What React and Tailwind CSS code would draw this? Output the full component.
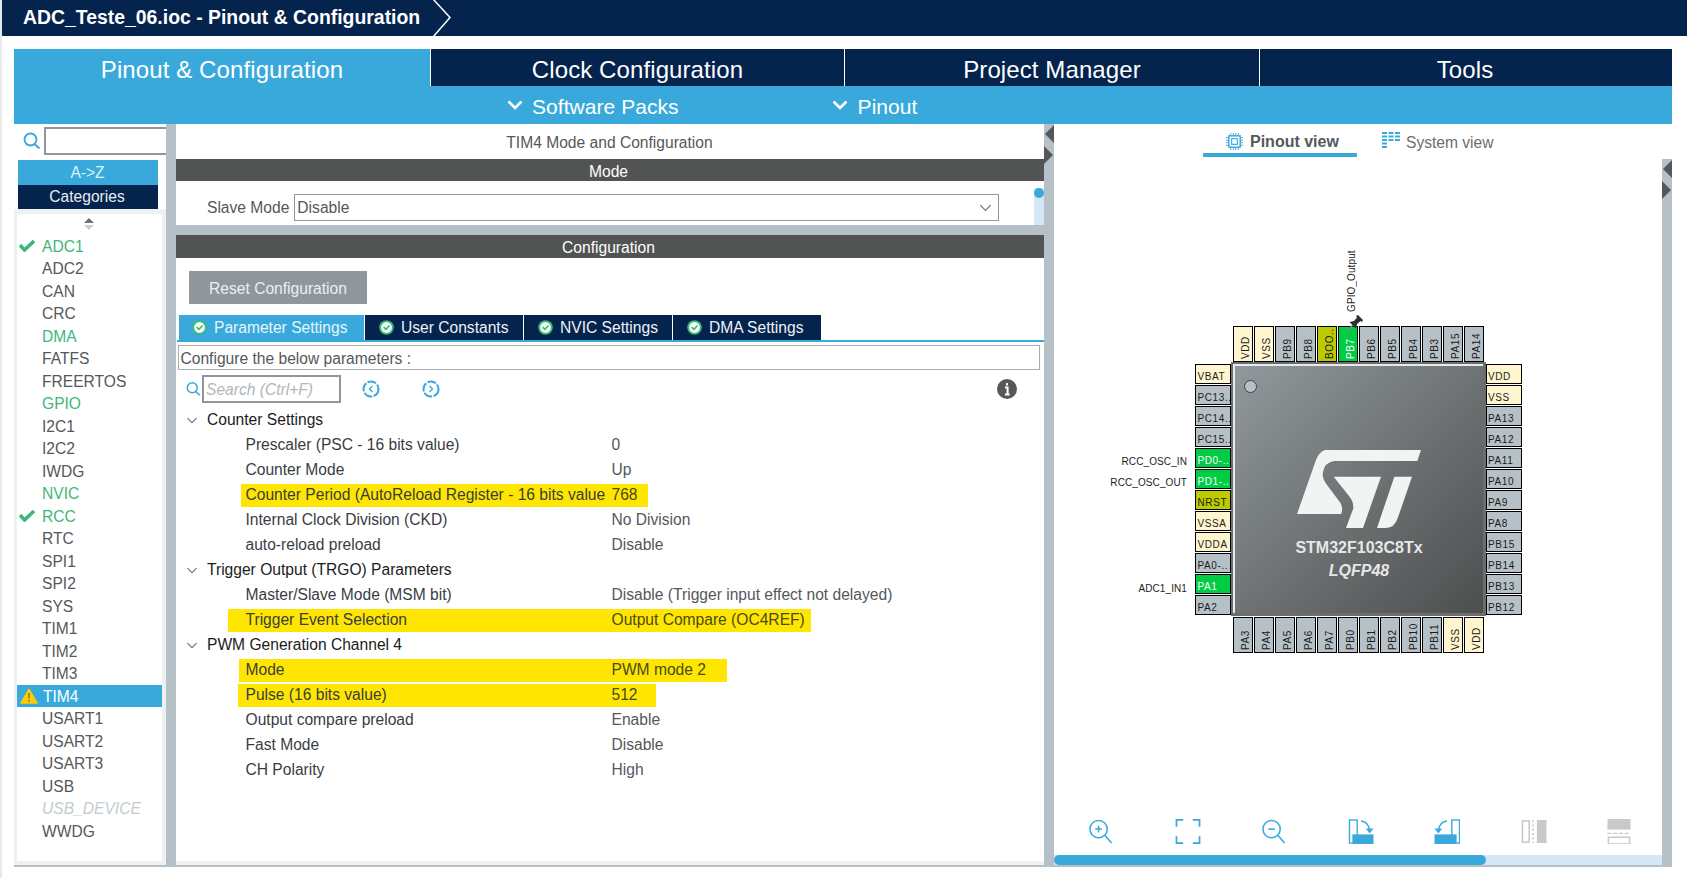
import React from 'react';

const peripherals = [
  { name: 'ADC1', state: 'ok' },
  { name: 'ADC2' },
  { name: 'CAN' },
  { name: 'CRC' },
  { name: 'DMA', state: 'green' },
  { name: 'FATFS' },
  { name: 'FREERTOS' },
  { name: 'GPIO', state: 'green' },
  { name: 'I2C1' },
  { name: 'I2C2' },
  { name: 'IWDG' },
  { name: 'NVIC', state: 'green' },
  { name: 'RCC', state: 'ok' },
  { name: 'RTC' },
  { name: 'SPI1' },
  { name: 'SPI2' },
  { name: 'SYS' },
  { name: 'TIM1' },
  { name: 'TIM2' },
  { name: 'TIM3' },
  { name: 'TIM4', state: 'selected' },
  { name: 'USART1' },
  { name: 'USART2' },
  { name: 'USART3' },
  { name: 'USB' },
  { name: 'USB_DEVICE', state: 'disabled' },
  { name: 'WWDG' },
];

const paramGroups = [
  {
    title: 'Counter Settings',
    rows: [
      { label: 'Prescaler (PSC - 16 bits value)', value: '0' },
      { label: 'Counter Mode', value: 'Up' },
      { label: 'Counter Period (AutoReload Register - 16 bits value', value: '768', hl: 'ml-[-5px] pl-[5px] w-[407px]' },
      { label: 'Internal Clock Division (CKD)', value: 'No Division' },
      { label: 'auto-reload preload', value: 'Disable' },
    ],
  },
  {
    title: 'Trigger Output (TRGO) Parameters',
    rows: [
      { label: 'Master/Slave Mode (MSM bit)', value: 'Disable (Trigger input effect not delayed)' },
      { label: 'Trigger Event Selection', value: 'Output Compare (OC4REF)', hl: 'ml-[-18px] pl-[18px] w-[583px]' },
    ],
  },
  {
    title: 'PWM Generation Channel 4',
    rows: [
      { label: 'Mode', value: 'PWM mode 2', hl: 'ml-[-7px] pl-[7px] w-[488px]' },
      { label: 'Pulse (16 bits value)', value: '512', hl: 'ml-[-8px] pl-[8px] w-[418px]' },
      { label: 'Output compare preload', value: 'Enable' },
      { label: 'Fast Mode', value: 'Disable' },
      { label: 'CH Polarity', value: 'High' },
    ],
  },
];

const configTabs = [
  { label: 'Parameter Settings', w: 'w-[185px]', pl: 'pl-[13px]', on: true },
  { label: 'User Constants', w: 'w-[158px]', pl: 'pl-[14px]' },
  { label: 'NVIC Settings', w: 'w-[148px]', pl: 'pl-[14px]' },
  { label: 'DMA Settings', w: 'w-[148px]', pl: 'pl-[14px]' },
];

const pinColors = {
  io: 'bg-[#b6c1c7] text-[#1c1c1c]',
  pwr: 'bg-[#fff6cf] text-[#1c1c1c]',
  ok: 'bg-[#00cc44] text-white',
  olive: 'bg-[#bccb00] text-[#1c1c1c]',
};

const topPins = [['VDD', 'pwr'], ['VSS', 'pwr'], ['PB9', 'io'], ['PB8', 'io'], ['BOO..', 'olive'], ['PB7', 'ok'], ['PB6', 'io'], ['PB5', 'io'], ['PB4', 'io'], ['PB3', 'io'], ['PA15', 'io'], ['PA14', 'io']];
const bottomPins = [['PA3', 'io'], ['PA4', 'io'], ['PA5', 'io'], ['PA6', 'io'], ['PA7', 'io'], ['PB0', 'io'], ['PB1', 'io'], ['PB2', 'io'], ['PB10', 'io'], ['PB11', 'io'], ['VSS', 'pwr'], ['VDD', 'pwr']];
const leftPins = [['VBAT', 'pwr'], ['PC13..', 'io'], ['PC14..', 'io'], ['PC15..', 'io'], ['PD0-..', 'ok'], ['PD1-..', 'ok'], ['NRST', 'olive'], ['VSSA', 'pwr'], ['VDDA', 'pwr'], ['PA0-..', 'io'], ['PA1', 'ok'], ['PA2', 'io']];
const rightPins = [['VDD', 'pwr'], ['VSS', 'pwr'], ['PA13', 'io'], ['PA12', 'io'], ['PA11', 'io'], ['PA10', 'io'], ['PA9', 'io'], ['PA8', 'io'], ['PB15', 'io'], ['PB14', 'io'], ['PB13', 'io'], ['PB12', 'io']];

const SearchIcon = ({ className }) => (
  <svg viewBox="0 0 18 18" className={className} fill="none" stroke="#39a9dc">
    <circle cx="7.5" cy="7.5" r="6" strokeWidth="1.8" />
    <path d="M11.5 12 L16.5 16.5" strokeWidth="2" />
  </svg>
);

const GreenCheck = ({ className }) => (
  <svg viewBox="0 0 16 12" className={className} fill="none" stroke="#3cb878" strokeWidth="3.6">
    <path d="M1 5 L5.5 10 L15 1" />
  </svg>
);

const CircleCheck = () => (
  <svg viewBox="0 0 16 16" className="w-[15px] h-[15px] shrink-0">
    <circle cx="8" cy="8" r="7.8" fill="#3cb878" />
    <circle cx="8" cy="8" r="5.8" fill="#f2fbf6" />
    <path d="M5 7.6 L7.4 10 L11.2 5.8" fill="none" stroke="#3cb878" strokeWidth="1.6" />
  </svg>
);

const Chevron = ({ className, color = '#fff', width = 2.6 }) => (
  <svg viewBox="0 0 16 10" className={className} fill="none" stroke={color} strokeWidth={width}>
    <path d="M1.5 1.5 L8 8 L14.5 1.5" />
  </svg>
);

const Triangles = () => (
  <>
    <div className="w-0 h-0 border-y-[9px] border-y-transparent border-r-[9px] border-r-[#55585a] ml-auto" />
    <div className="w-0 h-0 border-y-[9px] border-y-transparent border-l-[9px] border-l-[#55585a] mt-[3px]" />
  </>
);

const PeripheralRow = ({ item }) => {
  const colors = {
    ok: 'text-[#3cb878]',
    green: 'text-[#3cb878]',
    selected: 'bg-[#39a9dc] text-white',
    disabled: 'text-[#c3cbd0] italic',
  };
  return (
    <div className={`relative h-[22.5px] flex items-center pl-[25px] pt-[1px] ${colors[item.state] || 'text-[#55585a]'}`}>
      {item.state === 'ok' && <GreenCheck className="absolute left-[2px] top-[5px] w-[16px] h-[12px]" />}
      {item.state === 'selected' && (
        <svg viewBox="0 0 18 16" className="absolute left-[3px] top-[3px] w-[18px] h-[16px]">
          <path d="M9 1.5 L17 15 L1 15 Z" fill="#ffcc00" stroke="#ffcc00" strokeWidth="1.5" strokeLinejoin="round" />
          <path d="M9 5 L9 10.5 M9 11.8 L9 13.8" stroke="#8a7a30" strokeWidth="1.6" />
        </svg>
      )}
      <span className={item.state === 'selected' ? 'ml-[1px]' : ''}>{item.name}</span>
    </div>
  );
};

const SidePin = ({ pin, side }) => (
  <div className={`w-[36px] h-[20px] border border-black flex items-center pt-[4px] text-[10px] tracking-[0.6px] whitespace-nowrap overflow-hidden ${side === 'left' ? 'pl-[1.5px]' : 'pl-[1px]'} ${pinColors[pin[1]]}`}>
    {pin[0]}
  </div>
);

const VerticalPin = ({ pin }) => (
  <div className={`w-[20px] h-[36px] border border-black flex items-center justify-start [writing-mode:vertical-rl] rotate-180 pt-[2px] pr-[4px] text-[10px] tracking-[0.6px] whitespace-nowrap overflow-hidden ${pinColors[pin[1]]}`}>
    {pin[0]}
  </div>
);

export default function App() {
  return (
    <div className="w-[1687px] h-[878px] overflow-hidden bg-white border-l-2 border-[#e6e8ea] font-['Liberation_Sans',Arial,sans-serif] text-[15.6px] text-[#55585a]">
      {/* top breadcrumb */}
      <div className="h-[36px] bg-[#04234d] flex items-center pl-[21px] relative">
        <span className="text-white font-bold text-[19.4px] whitespace-nowrap">ADC_Teste_06.ioc - Pinout &amp; Configuration</span>
        <svg viewBox="0 0 20 36" className="absolute left-[430px] top-0 w-[20px] h-[36px]" fill="none" stroke="#fff" strokeWidth="1.5">
          <path d="M1 -1 L18 17.5 L1 37" />
        </svg>
      </div>

      <div className="ml-[12px] w-[1658px] mt-[13px]">
        {/* main tabs */}
        <div className="h-[37px] flex text-[24px] tracking-[0.1px] text-white">
          <div className="w-[416px] bg-[#39a9dc] flex items-center justify-center pt-[4px] mr-[1px]">Pinout &amp; Configuration</div>
          <div className="w-[413px] bg-[#04234d] flex items-center justify-center pt-[4px] mr-[1px]">Clock Configuration</div>
          <div className="w-[414px] bg-[#04234d] flex items-center justify-center pt-[4px] mr-[1px]">Project Manager</div>
          <div className="flex-1 bg-[#04234d] flex items-center justify-center pt-[4px] pr-[2px]">Tools</div>
        </div>
        <div className="h-[38px] bg-[#39a9dc] flex items-center text-[21px] tracking-[0.05px] text-white pl-[493px]">
          <Chevron className="w-[16px] h-[10px] mr-[9px]" />
          <span className="pt-[3px]">Software Packs</span>
          <Chevron className="w-[16px] h-[10px] ml-[153px] mr-[10px]" />
          <span className="pt-[3px]">Pinout</span>
        </div>

        {/* body */}
        <div className="h-[741px] flex border-b-0">
          {/* peripherals list */}
          <div className="w-[152px] flex flex-col">
            <div className="h-[85px] bg-white">
              <div className="flex items-center h-[30px] mt-[2px] pl-[9px]">
                <SearchIcon className="w-[18px] h-[18px] mr-[3px]" />
                <div className="flex-1 h-[28px] border-2 border-r-0 border-[#8f979d]" />
              </div>
              <div className="mx-[4px] mt-[4px] w-[140px]">
                <div className="h-[25px] bg-[#39a9dc] text-[#dff2fb] flex items-center justify-center pr-[1px]">A-&gt;Z</div>
                <div className="h-[24px] bg-[#04234d] text-[#e8edf2] flex items-center justify-center pr-[2px]">Categories</div>
              </div>
            </div>
            <div className="flex-1 bg-[#eef0f2] pl-[3px] pr-[4px] pt-[5px] pb-[4px] min-h-0">
              <div className="h-full bg-white pt-[20.75px] relative">
                <div className="absolute left-[67px] top-[4px] flex flex-col gap-[2px]">
                  <div className="w-0 h-0 border-x-[5px] border-x-transparent border-b-[5px] border-b-[#6d7275]" />
                  <div className="w-0 h-0 border-x-[5px] border-x-transparent border-t-[5px] border-t-[#c9ced1]" />
                </div>
                {peripherals.map((item) => (
                  <PeripheralRow key={item.name} item={item} />
                ))}
              </div>
            </div>
          </div>

          <div className="w-[10px] bg-[#b6c1c7]" />

          {/* mode and configuration */}
          <div className="w-[868px] flex flex-col">
            <div className="h-[35px] bg-white flex items-center justify-center pt-[3px] pr-[1px]">TIM4 Mode and Configuration</div>
            <div className="h-[22px] bg-[#525453] text-white flex items-center justify-center pt-[4px] pr-[3px]">Mode</div>
            <div className="h-[44px] bg-white flex items-start">
              <div className="flex items-center mt-[13px] pl-[31px]">
                <span className="mr-[5px] pt-[1px]">Slave Mode</span>
                <div className="w-[705px] h-[27px] border-[1.5px] border-[#8f979d] flex items-center pl-[2px] pt-[1px] relative">
                  Disable
                  <Chevron className="absolute right-[6px] top-[9px] w-[13px] h-[8px]" color="#6d7275" width={1.5} />
                </div>
              </div>
              <div className="ml-auto mt-[7px] w-[10px] h-[37px] bg-[#d6e6f5]">
                <div className="w-[10px] h-[10px] rounded-full bg-[#39a9dc]" />
              </div>
            </div>
            <div className="h-[10px] bg-[#b6c1c7]" />
            <div className="h-[23px] bg-[#525453] text-white flex items-center justify-center pt-[3px] pr-[3px]">Configuration</div>

            <div className="flex-1 bg-white border-b-4 border-[#eef0f2] min-h-0">
              <div className="w-[178px] h-[33px] mt-[13px] ml-[13px] bg-[#8f979d] text-[#eceef0] flex items-center justify-center pt-[2px]">Reset Configuration</div>
              <div className="h-[25px] mt-[11px] ml-[3px] flex">
                {configTabs.map((tab) => (
                  <div key={tab.label} className={`${tab.w} ${tab.pl} mr-[1px] flex items-center gap-[7px] ${tab.on ? 'bg-[#39a9dc] text-[#e6f5fc]' : 'bg-[#04234d] text-[#eef2f6]'}`}>
                    <CircleCheck />
                    <span className="whitespace-nowrap">{tab.label}</span>
                  </div>
                ))}
              </div>
              <div className="h-[2px] ml-[1px] bg-[#39a9dc]" />
              <div className="h-[25px] w-[862px] mt-[3px] ml-[2px] border-[1.5px] border-[#a7adb2] flex items-center pl-[1.5px] pt-[2px]">Configure the below parameters :</div>
              <div className="h-[28px] mt-[5px] flex items-center pl-[10px]">
                <SearchIcon className="w-[15px] h-[16px] mr-[1px]" />
                <div className="w-[139px] h-[28px] border-2 border-[#8f979d] flex items-center pl-[2px] pt-[1px] italic text-[#b0b6ba]">Search (Ctrl+F)</div>
                <svg viewBox="0 0 18 18" className="w-[18px] h-[18px] ml-[21px]" fill="none" stroke="#39a9dc">
                  <circle cx="9" cy="9" r="7.5" strokeWidth="2" strokeDasharray="9 1.5" />
                  <path d="M10.5 6 L7.5 9 L10.5 12" strokeWidth="1.4" />
                </svg>
                <svg viewBox="0 0 18 18" className="w-[18px] h-[18px] ml-[42px]" fill="none" stroke="#39a9dc">
                  <circle cx="9" cy="9" r="7.5" strokeWidth="2" strokeDasharray="9 1.5" />
                  <path d="M7.5 6 L10.5 9 L7.5 12" strokeWidth="1.4" />
                </svg>
                <svg viewBox="0 0 20 20" className="w-[20px] h-[20px] ml-[557px]">
                  <circle cx="10" cy="10" r="10" fill="#55585a" />
                  <path d="M10 4 L10 6.4 M8 8.6 L10.6 8.6 L10.6 15 M8 15.4 L12.6 15.4" stroke="#fff" strokeWidth="2" fill="none" />
                </svg>
              </div>

              <div className="mt-[4.5px] text-[#3a3d3f]">
                {paramGroups.map((group) => (
                  <div key={group.title}>
                    <div className="h-[25px] flex items-center pl-[10px] text-[#1c1c1c]">
                      <Chevron className="w-[12px] h-[7px] mr-[9px]" color="#6d7275" width={1.6} />
                      {group.title}
                    </div>
                    {group.rows.map((row) => (
                      <div key={row.label} className="h-[25px] flex items-center pl-[69.5px]">
                        <div className={`flex items-center h-[23px] whitespace-nowrap ${row.hl ? `bg-[#ffe600] ${row.hl}` : 'w-[366px]'}`}>
                          <span className="w-[366px] shrink-0">{row.label}</span>
                          <span className={`whitespace-nowrap ${row.hl ? 'text-[#4a4a1a]' : 'text-[#55585a]'}`}>{row.value}</span>
                        </div>
                      </div>
                    ))}
                  </div>
                ))}
              </div>
            </div>
          </div>

          <div className="w-[10px] bg-[#b6c1c7] pt-[1px] overflow-hidden">
            <Triangles />
          </div>

          {/* pinout view */}
          <div className="w-[618px] flex flex-col bg-white">
            <div className="h-[35px] flex">
              <div className="ml-[149px] w-[154px] h-[33px] border-b-4 border-[#39a9dc] flex items-center pt-[6px] pl-[23px] font-bold text-[16px] text-[#55585a]">
                <svg viewBox="0 0 18 18" className="w-[17px] h-[17px] mr-[7px]" fill="none" stroke="#39a9dc">
                  <rect x="3" y="3" width="12" height="12" strokeWidth="1.5" />
                  <rect x="6" y="6" width="6" height="6" strokeWidth="1.2" />
                  <path d="M5 0 V3 M7.7 0 V3 M10.3 0 V3 M13 0 V3 M5 15 V18 M7.7 15 V18 M10.3 15 V18 M13 15 V18 M0 5 H3 M0 7.7 H3 M0 10.3 H3 M0 13 H3 M15 5 H18 M15 7.7 H18 M15 10.3 H18 M15 13 H18" strokeWidth="1" />
                </svg>
                Pinout view
              </div>
              <div className="ml-[25px] h-[33px] flex items-center pt-[4px] text-[#6a6e71]">
                <svg viewBox="0 0 18 18" className="w-[18px] h-[18px] mr-[6px] -mt-[3px]" fill="#39a9dc">
                  <rect x="0" y="0" width="5" height="2" />
                  <rect x="6.5" y="0" width="5" height="2" />
                  <rect x="13" y="0" width="5" height="2" />
                  <rect x="0" y="3.5" width="5" height="2" />
                  <rect x="6.5" y="3.5" width="5" height="2" />
                  <rect x="13" y="3.5" width="5" height="2" />
                  <rect x="0" y="7" width="5" height="2" />
                  <rect x="6.5" y="7" width="5" height="2" />
                  <rect x="13" y="7" width="5" height="2" />
                  <rect x="0" y="10.5" width="5" height="2" />
                  <rect x="0" y="14" width="5" height="2" />
                </svg>
                System view
              </div>
            </div>

            <div className="flex-1 flex min-h-0">
              <div className="flex-1 flex flex-col min-w-0">
                {/* chip */}
                <div className="pt-[167px] pl-[141px]">
                  <div className="relative grid grid-cols-[36px_255px_36px] grid-rows-[36px_254px_36px] w-[327px]">
                    <div className="col-start-2 flex gap-[1px] pl-[2.3px]">
                      {topPins.map((p) => <VerticalPin key={p[0] + 'top'} pin={p} />)}
                    </div>
                    <div className="col-start-1 row-start-2 flex flex-col gap-[1px] pt-[2px]">
                      {leftPins.map((p) => <SidePin key={p[0]} pin={p} side="left" />)}
                    </div>
                    <div className="col-start-2 row-start-2 border-2 border-[#6b6e6f] border-b-[3px] border-r-[3px]">
                      <div className="h-full border-l-2 border-t-2 border-[#e8eaeb] bg-linear-to-br from-[#92999c] to-[#4d4f4f] flex flex-col items-center relative">
                        <div className="absolute left-[9px] top-[14px] w-[13px] h-[13px] rounded-full bg-[#b6c1c7] border border-[#3f4142]" />
                        <svg viewBox="528 30 372 234" className="w-[124px] h-[78px] mt-[84px]" fill="#f2f3f3">
                          <path d="M612 30 L900 30 L889 63 L640 63 Q610 66 605 100 Q604 120 622 140 L658 188 Q668 205 660 222 L528 222 L582 68 Q592 36 612 30 Z" />
                          <path d="M638 110 L780 110 L726 264 L675 264 L697 205 Q698 185 684 168 Z" />
                          <path d="M820 110 L873 110 L830 235 Q820 264 795 264 L768 264 Z" />
                        </svg>
                        <div className="mt-[10px] font-bold text-[16px] text-[#e6e7e8] leading-[20px]">STM32F103C8Tx</div>
                        <div className="mt-[3px] font-bold italic text-[16px] text-[#e6e7e8] leading-[20px]">LQFP48</div>
                      </div>
                    </div>
                    <div className="col-start-3 row-start-2 flex flex-col gap-[1px] pt-[2px]">
                      {rightPins.map((p) => <SidePin key={p[0] + 'right'} pin={p} side="right" />)}
                    </div>
                    <div className="col-start-2 row-start-3 flex gap-[1px] pl-[2.3px] pt-[1px]">
                      {bottomPins.map((p) => <VerticalPin key={p[0] + 'bottom'} pin={p} />)}
                    </div>

                    {/* signal labels */}
                    <div className="absolute right-[335px] top-[128px] text-[10px] tracking-[0.1px] text-[#1c1c1c] whitespace-nowrap">RCC_OSC_IN</div>
                    <div className="absolute right-[335px] top-[149px] text-[10px] tracking-[0.1px] text-[#1c1c1c] whitespace-nowrap">RCC_OSC_OUT</div>
                    <div className="absolute right-[335px] top-[255px] text-[10px] tracking-[0.1px] text-[#1c1c1c] whitespace-nowrap">ADC1_IN1</div>
                    <div className="absolute left-[149px] top-[-78px] h-[64px] text-[10px] tracking-[0.1px] text-[#1c1c1c] [writing-mode:vertical-rl] rotate-180">GPIO_Output</div>
                    <svg viewBox="0 0 16 16" className="absolute left-[152px] top-[-11px] w-[16px] h-[16px]">
                      <path d="M1 15.5 L6.5 9" stroke="#8a8d8f" strokeWidth="1.4" />
                      <path d="M2.5 7 L7 6 L10 2.5 L9 1 L11 0 L16 5 L15 7 L13.5 6 L10 9 L9 13.5 Z" fill="#2d2f30" />
                    </svg>
                  </div>
                </div>

                {/* zoom and rotate tools */}
                <div className="mt-auto pl-[34px] flex gap-[60.5px] h-[25px]">
                  <svg viewBox="0 0 26 26" className="w-[26px] h-[25px]" fill="none" stroke="#39a9dc">
                    <circle cx="10.5" cy="10.5" r="9" strokeWidth="1.6" />
                    <path d="M10.5 7 V14 M7 10.5 H14" strokeWidth="1.6" />
                    <path d="M17 17 L24 25" strokeWidth="1.6" />
                  </svg>
                  <svg viewBox="0 0 26 26" className="w-[26px] h-[25px]" fill="none" stroke="#39a9dc" strokeWidth="1.8">
                    <path d="M1 8 V1 H8 M18 1 H25 V8 M1 18 V25 H8 M18 25 H25 V18" />
                  </svg>
                  <svg viewBox="0 0 26 26" className="w-[26px] h-[25px]" fill="none" stroke="#39a9dc">
                    <circle cx="10.5" cy="10.5" r="9" strokeWidth="1.6" />
                    <path d="M7 10.5 H14" strokeWidth="1.6" />
                    <path d="M17 17 L24 25" strokeWidth="1.6" />
                  </svg>
                  <svg viewBox="0 0 26 26" className="w-[26px] h-[25px]" fill="none" stroke="#39a9dc">
                    <rect x="1" y="1" width="8" height="24" strokeWidth="1.4" />
                    <rect x="4" y="16" width="22" height="10" fill="#39a9dc" stroke="none" />
                    <path d="M13 2 Q21 3 22 12" strokeWidth="1.6" />
                    <path d="M18 10 L26 10 L22 15 Z" fill="#39a9dc" stroke="none" />
                  </svg>
                  <svg viewBox="0 0 26 26" className="w-[26px] h-[25px]" fill="none" stroke="#39a9dc">
                    <rect x="18" y="1" width="8" height="24" strokeWidth="1.4" />
                    <rect x="0" y="16" width="23" height="10" fill="#39a9dc" stroke="none" />
                    <path d="M13 2 Q5 3 4 12" strokeWidth="1.6" />
                    <path d="M0 10 L8 10 L4 15 Z" fill="#39a9dc" stroke="none" />
                  </svg>
                  <svg viewBox="0 0 26 26" className="w-[26px] h-[25px]" fill="none" stroke="#c9c9c9">
                    <rect x="1" y="2" width="7" height="22" strokeWidth="1.6" />
                    <path d="M12 1 V25" strokeWidth="1.4" strokeDasharray="2.5 2" />
                    <rect x="16" y="1" width="10" height="24" fill="#c9c9c9" stroke="none" />
                  </svg>
                  <svg viewBox="0 0 24 26" className="w-[24px] h-[25px]" fill="none" stroke="#c9c9c9">
                    <rect x="0" y="0" width="24" height="11" fill="#c9c9c9" stroke="none" />
                    <path d="M0 15 H24" strokeWidth="1.4" strokeDasharray="4 2" />
                    <rect x="1" y="19" width="22" height="7" strokeWidth="1.6" />
                  </svg>
                </div>
                <div className="mt-[11px] h-[10px] bg-[#d6e6f5] flex">
                  <div className="w-[432px] h-full rounded-[5px] bg-[#39a9dc]" />
                </div>
              </div>
              <div className="w-[10px] bg-[#b6c1c7] pt-[1px] overflow-hidden">
                <Triangles />
              </div>
            </div>
          </div>
        </div>
        <div className="h-[2px] bg-[#b6c1c7]" />
      </div>
    </div>
  );
}
